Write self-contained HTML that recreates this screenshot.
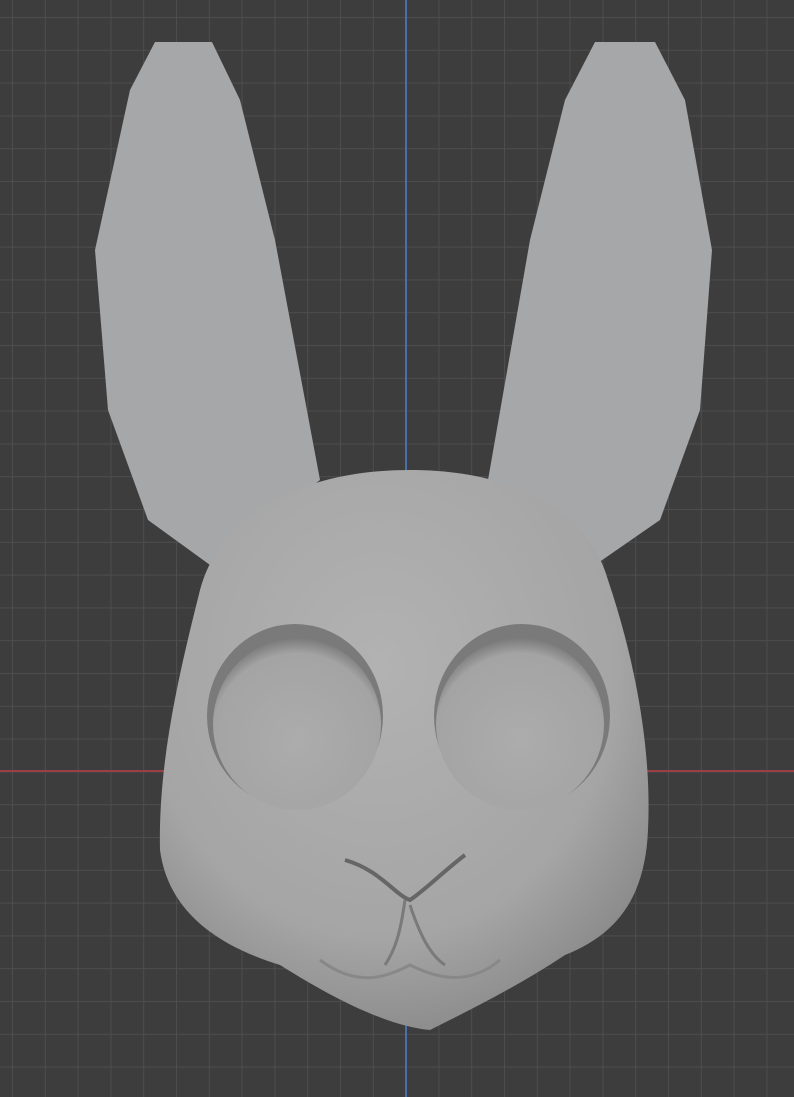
<!DOCTYPE html>
<html><head><meta charset="utf-8"><style>
html,body{margin:0;padding:0;background:#3d3d3d;}
svg{display:block}
</style></head><body>
<svg width="794" height="1097" viewBox="0 0 794 1097" xmlns="http://www.w3.org/2000/svg">
<defs>
<pattern id="g" x="12" y="17" width="32.8" height="32.8" patternUnits="userSpaceOnUse">
<path d="M0 0H32.8M0 0V32.8" stroke="#4d4d4d" stroke-width="2" fill="none"/>
</pattern>
<radialGradient id="hd" cx="0.45" cy="0.35" r="0.75">
<stop offset="0" stop-color="#b2b2b2"/><stop offset="0.65" stop-color="#a5a5a5"/><stop offset="1" stop-color="#808080"/>
</radialGradient>
<radialGradient id="ey" cx="0.5" cy="0.6" r="0.6">
<stop offset="0" stop-color="#acacac"/><stop offset="0.85" stop-color="#a4a4a4"/><stop offset="1" stop-color="#7a7a7a"/>
</radialGradient>
</defs>
<rect width="794" height="1097" fill="#3d3d3d"/>
<rect width="794" height="1097" fill="url(#g)"/>
<line x1="406" y1="0" x2="406" y2="1097" stroke="#4a6fa8" stroke-width="2"/>
<line x1="0" y1="771" x2="794" y2="771" stroke="#9a4045" stroke-width="2"/>
<polygon fill="#a6a7a9" points="155,42 212,42 240,100 275,240 320,480 210,565 148,520 108,410 95,250 130,90"/>
<polygon fill="#a6a7a9" points="595,42 655,42 685,100 712,250 700,410 660,520 595,565 488,480 530,240 565,100"/>
<path fill="url(#hd)" d="M410,470 C520,470 590,515 608,580 C635,660 652,750 648,830 C645,900 615,935 565,955 C520,985 470,1010 430,1030 C380,1025 320,990 280,965 C215,945 168,910 160,850 C158,760 180,670 200,590 C220,515 300,470 410,470 Z"/>
<ellipse cx="295" cy="716" rx="88" ry="92" fill="#7a7a7a"/>
<ellipse cx="297" cy="724" rx="84" ry="86" fill="url(#ey)"/>
<ellipse cx="522" cy="716" rx="88" ry="92" fill="#7a7a7a"/>
<ellipse cx="520" cy="724" rx="84" ry="86" fill="url(#ey)"/>
<path d="M345,860 C380,870 395,895 410,900 C425,890 445,870 465,855" stroke="#666" stroke-width="4" fill="none"/>
<path d="M405,900 C400,935 395,950 385,965 M410,905 C420,935 430,955 445,965" stroke="#7a7a7a" stroke-width="3" fill="none"/>
<path d="M320,960 C360,990 390,975 410,965 C440,980 470,985 500,960" stroke="#888" stroke-width="3" fill="none"/>
</svg>
</body></html>
